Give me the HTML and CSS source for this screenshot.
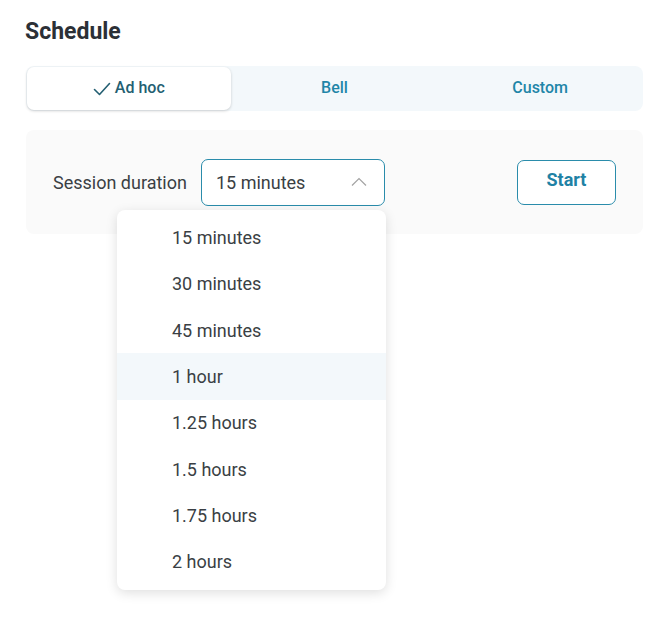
FILE: index.html
```html
<!DOCTYPE html>
<html lang="en">
<head>
    <meta charset="UTF-8">
    <meta name="viewport" content="width=device-width, initial-scale=1.0">
    <title>Schedule</title>
    <link rel="stylesheet" href="styles.css">
</head>
<body>
    <div class="container">
        <h1 class="title">Schedule</h1>

        <div class="tabs">
            <button class="tab active">
                <svg class="tab-check" width="18" height="14" viewBox="0 0 18 14">
                    <polyline points="1.5,7.5 6.5,12.5 16.5,1.5" fill="none" stroke="currentColor" stroke-width="1.6" stroke-linecap="round" stroke-linejoin="round"/>
                </svg>
                Ad hoc
            </button>
            <button class="tab">Bell</button>
            <button class="tab">Custom</button>
        </div>

        <div class="panel">
            <div class="field">
                <span class="field-label">Session duration</span>
                <div class="select-wrap">
                    <div class="select open">
                        <span>15 minutes</span>
                        <svg class="chevron" width="16" height="10" viewBox="0 0 16 10">
                            <polyline points="1,8.5 8,1.5 15,8.5" fill="none" stroke="#a3a3a3" stroke-width="1.2"/>
                        </svg>
                    </div>
                    <!-- Options list -->
                    <ul class="dropdown">
                        <li class="option">15 minutes</li>
                        <li class="option">30 minutes</li>
                        <li class="option">45 minutes</li>
                        <li class="option hover">1 hour</li>
                        <li class="option">1.25 hours</li>
                        <li class="option">1.5 hours</li>
                        <li class="option">1.75 hours</li>
                        <li class="option">2 hours</li>
                    </ul>
                </div>
            </div>
            <button class="start-button">Start</button>
        </div>
    </div>
</body>
</html>
```

FILE: styles.css
```css
body {
    font-family: Roboto, "Liberation Sans", Arial, sans-serif;
    margin: 0;
    min-height: 620px;
    background: #ffffff;
    color: #3a3f44;
}
.container {
    width: 617px;
    min-height: 600px;
    padding: 18px 0 0 26px;
}
.title {
    margin: 0 0 0 -1px;
    font-size: 23px;
    line-height: 28px;
    font-weight: 700;
    color: #2b3036;
}
.tabs {
    margin-top: 20px;
    height: 45px;
    box-sizing: border-box;
    padding: 1px;
    display: grid;
    grid-template-columns: repeat(3, 1fr);
    gap: 2px;
    background: #f3f8fb;
    border-radius: 8px;
}
.tab {
    border: none;
    background: transparent;
    font-family: inherit;
    font-size: 16px;
    font-weight: 500;
    color: #1f86a8;
    display: flex;
    align-items: center;
    justify-content: center;
    gap: 4px;
    cursor: pointer;
    border-radius: 7px;
    padding: 0 0 2px;
}
.tab.active {
    background: #ffffff;
    color: #245f72;
    box-shadow: 0 1px 3px rgba(0, 0, 0, 0.18);
}
.tab-check {
    margin-top: 3px;
}
.panel {
    margin-top: 19px;
    height: 104px;
    box-sizing: border-box;
    padding: 0 27px;
    background: #fafafa;
    border-radius: 8px;
    display: flex;
    align-items: center;
    justify-content: space-between;
}
.field {
    display: flex;
    align-items: center;
    gap: 14px;
}
.field-label {
    font-size: 18px;
    color: #3a3f44;
}
.select-wrap {
    position: relative;
}
.select {
    width: 184px;
    height: 47px;
    box-sizing: border-box;
    border: 1.5px solid #2a8cab;
    border-radius: 7px;
    background: #ffffff;
    display: flex;
    align-items: center;
    justify-content: space-between;
    padding: 0 17px 0 14px;
    font-size: 18px;
    color: #3a3f44;
}
.dropdown {
    position: absolute;
    top: 51px;
    right: -1px;
    width: 269px;
    margin: 0;
    padding: 5px 0;
    list-style: none;
    background: #ffffff;
    border-radius: 8px;
    box-shadow: 0 3px 12px rgba(0, 0, 0, 0.13);
    z-index: 10;
}
.option {
    height: 46.3px;
    display: flex;
    align-items: center;
    padding-left: 55px;
    font-size: 18px;
    color: #3a3f44;
}
.option.hover {
    background: #f3f8fb;
}
.start-button {
    width: 99px;
    height: 45px;
    border: 1.5px solid #2a8cab;
    border-radius: 7px;
    background: #ffffff;
    font-family: inherit;
    font-size: 18px;
    font-weight: 700;
    color: #1f82a5;
    cursor: pointer;
    padding: 0 0 6px;
}
```
